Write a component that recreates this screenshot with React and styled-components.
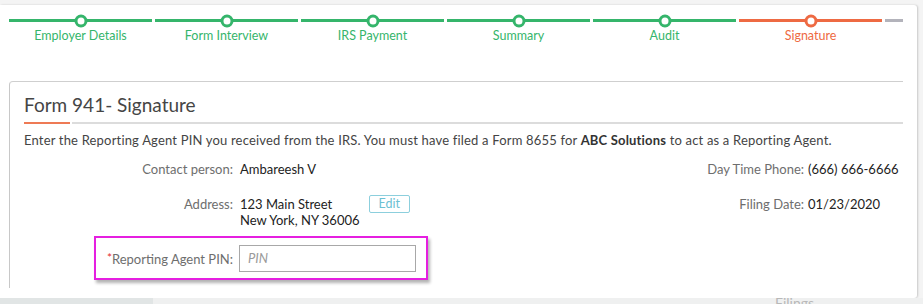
import React from "react";
import styled, { createGlobalStyle } from "styled-components";

const Global = createGlobalStyle`
  html, body { margin: 0; padding: 0; }
  body {
    background: #f4f4f4;
    font-family: Lato, "Open Sans", Arial, sans-serif;
    overflow: hidden;
    height: 304px;
  }
`;

const Page = styled.div`
  padding-top: 5px;
  height: 304px;
  box-sizing: border-box;
  display: flex;
  flex-direction: column;
`;

const Panel = styled.div`
  width: 917px;
  height: 293px;
  background: #fff;
  box-shadow: 1px 0 2px rgba(0, 0, 0, 0.18);
  border-radius: 0 3px 3px 0;
  overflow: hidden;
  flex: none;
`;

const Stepper = styled.div`
  display: flex;
  gap: 3px;
  padding: 0 0 0 9px;
  margin-top: 14px;
`;

const Step = styled.div`
  width: ${(p) => (p.$partial ? "18px" : "143px")};
  flex: none;
  display: flex;
  flex-direction: column;
  align-items: center;
  color: ${(p) => p.$color};
`;

const Track = styled.div`
  position: relative;
  width: 100%;
  height: 3px;
  background: ${(p) => p.$color};
`;

const Dot = styled.span`
  position: absolute;
  left: 50%;
  top: 50%;
  width: 13px;
  height: 13px;
  box-sizing: border-box;
  border: 3px solid ${(p) => p.$color};
  border-radius: 50%;
  background: #fff;
  transform: translate(-50%, -50%);
`;

const StepLabel = styled.div`
  margin-top: 6px;
  font-size: 12.5px;
  line-height: 16px;
  white-space: nowrap;
`;

const Card = styled.div`
  margin: 37px 0 0 9px;
  width: 894px;
  height: 207px;
  box-sizing: border-box;
  border-top: 1px solid #cfcfcf;
  border-left: 1px solid #c8c8c8;
  border-top-left-radius: 4px;
  padding: 11px 0 0 14px;
`;

const Title = styled.h1`
  margin: 0;
  font-size: 19px;
  font-weight: 400;
  line-height: 24px;
  color: #454545;
`;

const Underline = styled.div`
  margin-top: 5px;
  display: flex;
  gap: 2px;
  height: 2px;
`;

const Accent = styled.span`
  width: 46px;
  background: #ee7a55;
`;

const Rule = styled.span`
  flex: 1;
  background: #dcdcdc;
`;

const Description = styled.p`
  margin: 7px 0 0;
  font-size: 13px;
  letter-spacing: 0.18px;
  line-height: 18px;
  color: #444;
  b { font-weight: 700; color: #333; }
`;

const Details = styled.div`
  margin-top: 12px;
  display: grid;
  grid-template-columns: 216px 1fr auto 95px;
  row-gap: 19px;
  font-size: 13px;
  line-height: 16px;
`;

const Label = styled.div`
  color: #6e6e6e;
  text-align: right;
  padding-right: ${(p) => p.$gap || 7}px;
  white-space: nowrap;
`;

const Value = styled.div`
  color: #222;
  white-space: nowrap;
  display: flex;
  align-items: flex-start;
`;

const Lines = styled.div`
  display: flex;
  flex-direction: column;
`;

const EditButton = styled.button`
  margin-left: 9px;
  margin-top: -1px;
  height: 18px;
  padding: 0 9px;
  border: 1px solid #8ccfdd;
  border-radius: 2px;
  background: #fff;
  color: #6cc0d3;
  font-family: inherit;
  font-size: 12.5px;
  line-height: 14px;
`;

const Highlight = styled.div`
  margin: 8px 0 0 70px;
  width: 334px;
  height: 44px;
  box-sizing: border-box;
  border: 2px solid #e51fe0;
  box-shadow: 2px 3px 3px rgba(0, 0, 0, 0.3);
  display: flex;
  align-items: center;
  font-size: 13px;
`;

const PinLabel = styled.label`
  width: 137px;
  text-align: right;
  padding-right: 6px;
  color: #6e6e6e;
  white-space: nowrap;
  flex: none;
`;

const Star = styled.span`
  color: #e53030;
  vertical-align: 2px;
  font-size: 12px;
`;

const PinInput = styled.input`
  width: 177px;
  height: 27px;
  box-sizing: border-box;
  border: 1px solid #a8a8a8;
  padding: 0 8px;
  font-family: inherit;
  font-size: 13px;
  color: #333;
  outline: none;
  &::placeholder { color: #9a9a9a; font-style: italic; }
`;

const BottomStrip = styled.div`
  flex: 1;
  display: flex;
  background: #eff0f0;
  overflow: hidden;
`;

const StripBlock = styled.div`
  width: 153px;
  background: #e1e5e5;
`;

const StripText = styled.div`
  margin-left: 622px;
  margin-top: -3px;
  font-size: 14px;
  color: #b8b8b8;
  line-height: 16px;
`;

const GREEN = "#35b56b";
const ORANGE = "#ee6a43";
const GRAY = "#b3b3bb";

const steps = [
  { label: "Employer Details", color: GREEN },
  { label: "Form Interview", color: GREEN },
  { label: "IRS Payment", color: GREEN },
  { label: "Summary", color: GREEN },
  { label: "Audit", color: GREEN },
  { label: "Signature", color: ORANGE },
];

export default function App() {
  return (
    <>
      <Global />
      <Page>
        <Panel>
          <Stepper>
            {steps.map((s) => (
              <Step key={s.label} $color={s.color}>
                <Track $color={s.color}>
                  <Dot $color={s.color} />
                </Track>
                <StepLabel>{s.label}</StepLabel>
              </Step>
            ))}
            <Step $partial $color={GRAY}>
              <Track $color={GRAY} />
            </Step>
          </Stepper>
          <Card>
            <Title>Form 941- Signature</Title>
            <Underline>
              <Accent />
              <Rule />
            </Underline>
            <Description>
              Enter the Reporting Agent PIN you received from the IRS. You must have filed a Form 8655 for{" "}
              <b>ABC Solutions</b> to act as a Reporting Agent.
            </Description>
            <Details>
              <Label>Contact person:</Label>
              <Value>Ambareesh V</Value>
              <Label $gap={4}>Day Time Phone:</Label>
              <Value>(666) 666-6666</Value>
              <Label>Address:</Label>
              <Value>
                <Lines>
                  <span>123 Main Street</span>
                  <span>New York, NY 36006</span>
                </Lines>
                <EditButton type="button">Edit</EditButton>
              </Value>
              <Label $gap={4}>Filing Date:</Label>
              <Value>01/23/2020</Value>
            </Details>
            <Highlight>
              <PinLabel htmlFor="pin">
                <Star>*</Star>Reporting Agent PIN:
              </PinLabel>
              <PinInput id="pin" placeholder="PIN" />
            </Highlight>
          </Card>
        </Panel>
        <BottomStrip>
          <StripBlock />
          <StripText>Filings</StripText>
        </BottomStrip>
      </Page>
    </>
  );
}
